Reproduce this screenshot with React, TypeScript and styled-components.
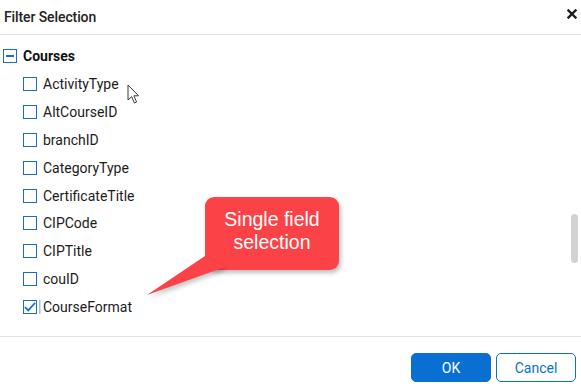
import styled, { createGlobalStyle } from 'styled-components';

const fields = [
  { name: 'ActivityType', checked: false },
  { name: 'AltCourseID', checked: false },
  { name: 'branchID', checked: false },
  { name: 'CategoryType', checked: false },
  { name: 'CertificateTitle', checked: false },
  { name: 'CIPCode', checked: false },
  { name: 'CIPTitle', checked: false },
  { name: 'couID', checked: false },
  { name: 'CourseFormat', checked: true },
];

export default function App() {
  return (
    <>
      <GlobalStyle />
      <Dialog>
        <Header>
          <Title>Filter Selection</Title>
          <CloseButton aria-label="Close">
            <svg width="10" height="10" viewBox="0 0 10 10">
              <path d="M1.5 1.5 L8.5 8.5 M8.5 1.5 L1.5 8.5" stroke="#1d1d1d" strokeWidth="2.4" strokeLinecap="square" />
            </svg>
          </CloseButton>
        </Header>

        <Body>
          <TreeRow>
            <Toggle>
              <ToggleBar />
            </Toggle>
            <GroupLabel>Courses</GroupLabel>
          </TreeRow>
          {fields.map((f) => (
            <FieldRow key={f.name}>
              <Box $checked={f.checked}>
                {f.checked && (
                  <svg width="14" height="12" viewBox="0 0 14 12">
                    <path d="M1 6 L5 10 L13 1" fill="none" stroke="#1a6dc6" strokeWidth="2" />
                  </svg>
                )}
              </Box>
              <FieldLabel>{f.name}</FieldLabel>
            </FieldRow>
          ))}

          <Scrollbar />

          <Cursor width="13" height="20" viewBox="0 0 13 20">
            <path d="M1 1 L1 16 L4.6 12.6 L7.4 19 L9.6 18 L6.9 11.8 L11.6 11.8 Z" fill="#fff" stroke="#3a3a3a" strokeWidth="1" strokeLinejoin="round" />
          </Cursor>

          <Callout>
            <Tail width="82" height="48" viewBox="0 0 82 48">
              <polygon points="60,4 2,43 80,15" fill="#fb4347" />
            </Tail>
            Single field
            <br />
            selection
          </Callout>
        </Body>

        <Footer>
          <PrimaryButton>OK</PrimaryButton>
          <SecondaryButton>Cancel</SecondaryButton>
        </Footer>
      </Dialog>
    </>
  );
}

const GlobalStyle = createGlobalStyle`
  html, body {
    margin: 0;
    padding: 0;
    background: #fff;
  }
  body {
    font-family: Roboto, "Liberation Sans", sans-serif;
    color: #1b1b1b;
  }
`;

const Dialog = styled.div`
  width: 581px;
  height: 392px;
  display: flex;
  flex-direction: column;
  background: #fff;
  overflow: hidden;
`;

const Header = styled.div`
  height: 34px;
  flex-shrink: 0;
  display: flex;
  align-items: center;
  justify-content: space-between;
  padding: 0 3px 0 4px;
  border-bottom: 1px solid #e2e2e2;
`;

const Title = styled.h2`
  margin: 0;
  font-size: 14px;
  font-weight: 500;
  color: #222;
  letter-spacing: -0.1px;
`;

const CloseButton = styled.button`
  border: none;
  background: none;
  padding: 0;
  width: 12px;
  height: 14px;
  display: flex;
  align-items: center;
  justify-content: center;
  margin-top: -7px;
`;

const Body = styled.div`
  position: relative;
  flex: 1;
  padding-top: 7px;
  border-bottom: 1px solid #e2e2e2;
`;

const TreeRow = styled.div`
  height: 28px;
  display: flex;
  align-items: center;
  padding-left: 3px;
  gap: 6px;
`;

const Toggle = styled.span`
  width: 14px;
  height: 14px;
  box-sizing: border-box;
  border: 1.5px solid #1a6dc6;
  display: flex;
  align-items: center;
  justify-content: center;
`;

const ToggleBar = styled.span`
  width: 8px;
  height: 2px;
  background: #1a6dc6;
`;

const GroupLabel = styled.span`
  font-size: 14px;
  font-weight: 700;
  color: #111;
`;

const FieldRow = styled.div`
  height: 27.9px;
  display: flex;
  align-items: center;
  padding-left: 23px;
  gap: 6px;
`;

const Box = styled.span<{ $checked: boolean }>`
  width: 14px;
  height: 14px;
  box-sizing: border-box;
  border: 1.5px solid #1a6dc6;
  display: flex;
  align-items: center;
  justify-content: center;
  overflow: visible;
  box-shadow: ${(p) => (p.$checked ? '2px 0 0 0 #fff, 3.5px 0 0 0 #9cc3ea' : 'none')};
`;

const FieldLabel = styled.span`
  font-size: 14px;
  color: #1b1b1b;
`;

const Scrollbar = styled.div`
  position: absolute;
  right: 3px;
  top: 179px;
  width: 7px;
  height: 49px;
  border-radius: 4px;
  background: #d2d2d2;
`;

const Cursor = styled.svg`
  position: absolute;
  left: 127px;
  top: 49px;
`;

const Callout = styled.div`
  position: absolute;
  left: 205px;
  top: 162px;
  width: 134px;
  height: 73px;
  box-sizing: border-box;
  padding-top: 11px;
  border-radius: 9px;
  background: #fb4347;
  color: #fff;
  font-family: "Liberation Sans", Arial, sans-serif;
  font-size: 19.5px;
  line-height: 23px;
  text-align: center;
  box-shadow: 2px 3px 4px rgba(0, 0, 0, 0.25);
`;

const Tail = styled.svg`
  position: absolute;
  left: -60px;
  top: 55px;
  filter: drop-shadow(2px 3px 2px rgba(0, 0, 0, 0.22));
`;

const Footer = styled.div`
  flex-shrink: 0;
  height: 55px;
  display: flex;
  justify-content: flex-end;
  align-items: flex-start;
  gap: 5px;
  padding: 16px 5px 0 0;
  box-sizing: border-box;
`;

const PrimaryButton = styled.button`
  width: 80px;
  height: 29px;
  border-radius: 5px;
  border: 1px solid #0a6fd2;
  background: #0a6fd2;
  color: #fff;
  font-family: Roboto, "Liberation Sans", sans-serif;
  font-size: 14px;
`;

const SecondaryButton = styled(PrimaryButton)`
  background: #fff;
  color: #0a6fd2;
`;
